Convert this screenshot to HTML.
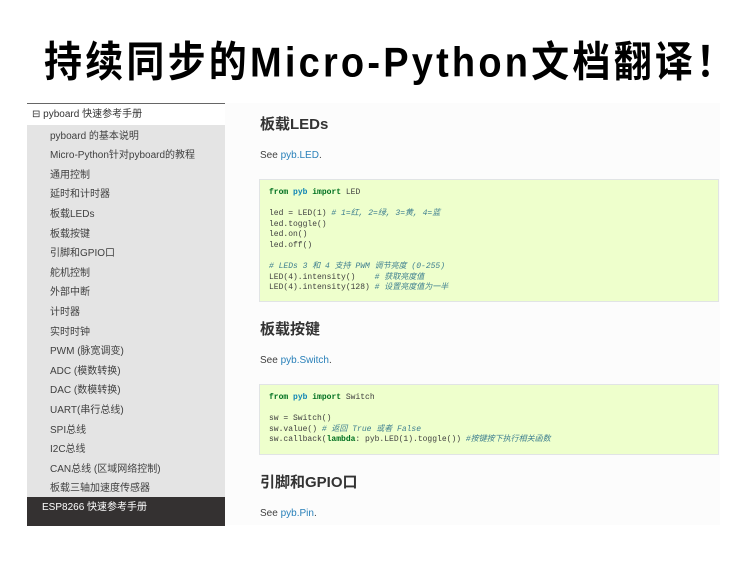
<!DOCTYPE html>
<html><head><meta charset="utf-8"><style>
body{margin:0;width:750px;height:587px;background:#fff;position:relative;overflow:hidden;font-family:"Liberation Sans","Noto Sans CJK SC",sans-serif}
.t{position:absolute;left:44px;top:31px;font-size:38px;font-weight:bold;letter-spacing:3.2px;color:#000;white-space:nowrap;font-family:"Liberation Sans","Noto Sans CJK SC",sans-serif;transform:scaleY(1.1);transform-origin:0 50%}
.sb{position:absolute;left:27px;top:103px;width:198px;height:422px;background:#e4e4e4;border-top:1px solid #666}
.sh{position:absolute;left:0;top:0;width:198px;height:21px;background:#fff;font-size:10px;color:#333;line-height:22px;padding-left:5px;box-sizing:border-box}
.it{position:absolute;left:23px;font-size:10px;color:#404040;white-space:nowrap}
.dk{position:absolute;left:0;top:393px;width:198px;height:29px;background:#343131;color:#fff;font-size:10px;line-height:22px;padding-left:15px;box-sizing:border-box}
.ct{position:absolute;left:225px;top:103px;width:495px;height:422px;background:#fcfcfc}
h2{position:absolute;left:35px;margin:0;font-size:15px;font-weight:bold;color:#333}
.p{position:absolute;left:35px;font-size:10px;color:#404040}
.p a{color:#2980b9}
.cd{position:absolute;left:34px;width:460px;background:#eeffcc;border:1px solid #e1e4e5;box-sizing:border-box;font-family:"Liberation Mono","Noto Sans CJK SC",monospace;font-size:8px;line-height:10.6px;color:#404040;padding:8px 9px;white-space:pre}
.k{color:#007020;font-weight:bold}.n{color:#0e84b5;font-weight:bold}.c{color:#408090;font-style:italic}
</style></head><body>
<div class="t">持续同步的Micro-Python文档翻译！</div>
<div class="sb">
<div class="sh">⊟ pyboard 快速参考手册</div>
<div class="it" style="top:23px">pyboard 的基本说明</div>
<div class="it" style="top:42px">Micro-Python针对pyboard的教程</div>
<div class="it" style="top:62px">通用控制</div>
<div class="it" style="top:81px">延时和计时器</div>
<div class="it" style="top:101px">板载LEDs</div>
<div class="it" style="top:121px">板载按键</div>
<div class="it" style="top:140px">引脚和GPIO口</div>
<div class="it" style="top:160px">舵机控制</div>
<div class="it" style="top:179px">外部中断</div>
<div class="it" style="top:199px">计时器</div>
<div class="it" style="top:219px">实时时钟</div>
<div class="it" style="top:238px">PWM (脉宽调变)</div>
<div class="it" style="top:258px">ADC (模数转换)</div>
<div class="it" style="top:277px">DAC (数模转换)</div>
<div class="it" style="top:297px">UART(串行总线)</div>
<div class="it" style="top:317px">SPI总线</div>
<div class="it" style="top:336px">I2C总线</div>
<div class="it" style="top:356px">CAN总线 (区域网络控制)</div>
<div class="it" style="top:375px">板载三轴加速度传感器</div>
<div class="dk">ESP8266 快速参考手册</div>
</div>
<div class="ct">
<h2 style="top:10px">板载LEDs</h2>
<div class="p" style="top:47px">See <a>pyb.LED</a>.</div>
<div class="cd" style="top:76px;height:123px"><span class="k">from</span> <span class="n">pyb</span> <span class="k">import</span> LED

led = LED(1) <span class="c"># 1=红, 2=绿, 3=黄, 4=蓝</span>
led.toggle()
led.on()
led.off()

<span class="c"># LEDs 3 和 4 支持 PWM 调节亮度 (0-255)</span>
LED(4).intensity()    <span class="c"># 获取亮度值</span>
LED(4).intensity(128) <span class="c"># 设置亮度值为一半</span></div>
<h2 style="top:215px">板载按键</h2>
<div class="p" style="top:252px">See <a>pyb.Switch</a>.</div>
<div class="cd" style="top:281px;height:71px"><span class="k">from</span> <span class="n">pyb</span> <span class="k">import</span> Switch

sw = Switch()
sw.value() <span class="c"># 返回 True 或者 False</span>
sw.callback(<span class="k">lambda</span>: pyb.LED(1).toggle()) <span class="c">#按键按下执行相关函数</span></div>
<h2 style="top:368px">引脚和GPIO口</h2>
<div class="p" style="top:405px">See <a>pyb.Pin</a>.</div>
</div>
</body></html>
